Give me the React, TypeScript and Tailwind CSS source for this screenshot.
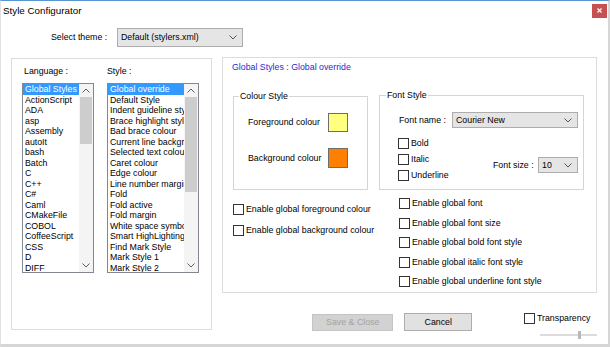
import React from "react";

function Chevron({ up = false, color = "#555" }: { up?: boolean; color?: string }) {
  return (
    <svg width="8" height="5" viewBox="0 0 8 5" className="shrink-0">
      <path
        d={up ? "M0.5 4.5 L4 1 L7.5 4.5" : "M0.5 0.5 L4 4 L7.5 0.5"}
        fill="none"
        stroke={color}
        strokeWidth="1"
      />
    </svg>
  );
}

function Select({ text, className = "" }: { text: string; className?: string }) {
  return (
    <div
      className={`flex items-center justify-between bg-[#e5e5e5] border border-[#adadad] pl-[3px] pr-[5px] ${className}`}
    >
      <span className="whitespace-nowrap">{text}</span>
      <Chevron />
    </div>
  );
}

function Check({ label, className = "" }: { label: string; className?: string }) {
  return (
    <div className={`flex items-center ${className}`}>
      <div className="w-[11px] h-[11px] border border-[#333] bg-white shrink-0" />
      <span className="ml-[2px] whitespace-nowrap">{label}</span>
    </div>
  );
}

function ListBox({
  items,
  className,
  thumbClass,
}: {
  items: string[];
  className: string;
  thumbClass: string;
}) {
  return (
    <div className={`flex border border-[#828790] bg-white h-[190px] ${className}`}>
      <div className="flex-1 overflow-hidden">
        {items.map((it, i) => (
          <div
            key={it}
            className={`h-[10.5px] leading-[10.5px] whitespace-nowrap pl-[2px] ${
              i === 0 ? "bg-[#3399ff] text-white" : "text-black"
            }`}
          >
            {it}
          </div>
        ))}
      </div>
      <div className="w-[14px] flex flex-col items-center bg-[#f4f4f4]">
        <div className="h-[13px] flex items-center justify-center">
          <Chevron up color="#606060" />
        </div>
        <div className={`w-[12px] bg-[#cdcdcd] ${thumbClass}`} />
        <div className="flex-1" />
        <div className="h-[13px] flex items-center justify-center">
          <Chevron color="#606060" />
        </div>
      </div>
    </div>
  );
}

const languages = [
  "Global Styles",
  "ActionScript",
  "ADA",
  "asp",
  "Assembly",
  "autoIt",
  "bash",
  "Batch",
  "C",
  "C++",
  "C#",
  "Caml",
  "CMakeFile",
  "COBOL",
  "CoffeeScript",
  "CSS",
  "D",
  "DIFF",
];

const styles = [
  "Global override",
  "Default Style",
  "Indent guideline style",
  "Brace highlight style",
  "Bad brace colour",
  "Current line background colour",
  "Selected text colour",
  "Caret colour",
  "Edge colour",
  "Line number margin",
  "Fold",
  "Fold active",
  "Fold margin",
  "White space symbol",
  "Smart HighLighting",
  "Find Mark Style",
  "Mark Style 1",
  "Mark Style 2",
];

export default function App() {
  return (
    <div className="w-[610px] h-[347px] bg-white border-t border-t-[#5796d2] border-l border-l-[#e2e2e2] border-r-[2px] border-r-[#d6d6d6] border-b-[3px] border-b-[#d6d6d6] flex flex-col font-['Liberation_Sans',Arial,sans-serif] text-[8.8px] leading-none text-black overflow-hidden">
      {/* Title bar */}
      <div className="h-[20px] flex items-center justify-between pl-[2px] pr-[1px]">
        <span className="text-[9.8px]">Style Configurator</span>
        <div className="w-[15px] h-[14px] bg-[#c75050] flex items-center justify-center -mt-[1px]">
          <svg width="5" height="5" viewBox="0 0 5 5">
            <path d="M0.5 0.5 L4.5 4.5 M4.5 0.5 L0.5 4.5" stroke="#fff" strokeWidth="1.2" />
          </svg>
        </div>
      </div>

      {/* Theme row */}
      <div className="mt-[7px] h-[19px] flex items-center pl-[50px]">
        <span className="w-[66px] whitespace-nowrap">Select theme :</span>
        <Select text="Default (stylers.xml)" className="w-[126px] h-[19px] bg-[#e1e1e1]" />
      </div>

      {/* Main */}
      <div className="mt-[10px] flex pl-[10px]">
        {/* Left panel */}
        <div className="mt-[1px] w-[201px] h-[272px] border border-[#dcdcdc] flex pl-[10px] pt-[6px] gap-[13px]">
          <div className="flex flex-col">
            <div className="h-[12px] leading-[12px] pl-[2px]">Language :</div>
            <ListBox items={languages} className="mt-[6px] w-[72px]" thumbClass="h-[47px]" />
          </div>
          <div className="flex flex-col">
            <div className="h-[12px] leading-[12px]">Style :</div>
            <ListBox items={styles} className="mt-[6px] w-[92px]" thumbClass="h-[95px]" />
          </div>
        </div>

        {/* Right column */}
        <div className="ml-[10px] w-[375px] flex flex-col">
          <div className="h-[236px] border border-[#dcdcdc] flex flex-col">
            <div className="pl-[9px] pt-[3px] h-[15px] leading-[12px] text-[#2a2ad0]">
              Global Styles : Global override
            </div>
            <div className="mt-[22px] flex items-start pl-[10px]">
              {/* Colour Style */}
              <div className="relative w-[135px] h-[94px] mt-[1px] border border-[#d5d5d5] flex flex-col pl-[14px] pt-[16px]">
                <span className="absolute -top-[6px] left-[5px] bg-white px-[1px] leading-[11px]">
                  Colour Style
                </span>
                <div className="flex items-center h-[19px]">
                  <span className="w-[80px]">Foreground colour</span>
                  <div className="w-[20px] h-[19px] bg-[#ffff80] border border-[#6d6d6d]" />
                </div>
                <div className="flex items-center h-[20px] mt-[16px]">
                  <span className="w-[80px]">Background colour</span>
                  <div className="w-[20px] h-[20px] bg-[#ff8000] border border-[#6d6d6d]" />
                </div>
              </div>
              {/* Font Style */}
              <div className="relative ml-[11px] w-[205px] h-[95px] border border-[#d5d5d5] flex flex-col pt-[16px]">
                <span className="absolute -top-[6px] left-[6px] bg-white px-[1px] leading-[11px]">
                  Font Style
                </span>
                <div className="flex items-center pl-[19px]">
                  <span className="w-[53px] whitespace-nowrap">Font name :</span>
                  <Select text="Courier New" className="w-[126px] h-[16px]" />
                </div>
                <div className="flex mt-[7px] pl-[18px] pr-[5px]">
                  <div className="flex flex-col">
                    <Check label="Bold" className="h-[16px]" />
                    <Check label="Italic" className="h-[16px]" />
                    <Check label="Underline" className="h-[16px]" />
                  </div>
                  <div className="ml-auto mt-[12px] flex items-center">
                    <span className="w-[45px] whitespace-nowrap">Font size :</span>
                    <Select text="10" className="w-[40px] h-[16px]" />
                  </div>
                </div>
              </div>
            </div>
            <div className="flex">
              <div className="w-[156px] pl-[10px] mt-[9px] flex flex-col">
                <Check label="Enable global foreground colour" className="h-[21px]" />
                <Check label="Enable global background colour" className="h-[21px]" />
              </div>
              <div className="pl-[20px] mt-[4px] flex flex-col">
                <Check label="Enable global font" className="h-[19.5px]" />
                <Check label="Enable global font size" className="h-[19.5px]" />
                <Check label="Enable global bold font style" className="h-[19.5px]" />
                <Check label="Enable global italic font style" className="h-[19.5px]" />
                <Check label="Enable global underline font style" className="h-[19.5px]" />
              </div>
            </div>
          </div>

          {/* Buttons */}
          <div className="mt-[20px] flex items-start">
            <div className="ml-[90px] mt-[1px] w-[82px] h-[17px] bg-[#d2d2d2] border border-[#c4c4c4] text-[#a3a3a3] flex items-center justify-center">
              Save &amp; Close
            </div>
            <div className="ml-[11px] w-[68px] h-[18px] bg-[#e1e1e1] border border-[#adadad] flex items-center justify-center">
              Cancel
            </div>
            <div className="ml-[52px] flex flex-col">
              <Check label="Transparency" className="h-[10px]" />
              <div className="relative ml-[16px] mt-[11px] w-[57px] h-[2px] bg-[#dcdcdc]">
                <div className="absolute left-[38px] -top-[3px] w-[3px] h-[8px] bg-[#b8b8b8]" />
              </div>
            </div>
          </div>
        </div>
      </div>
    </div>
  );
}
